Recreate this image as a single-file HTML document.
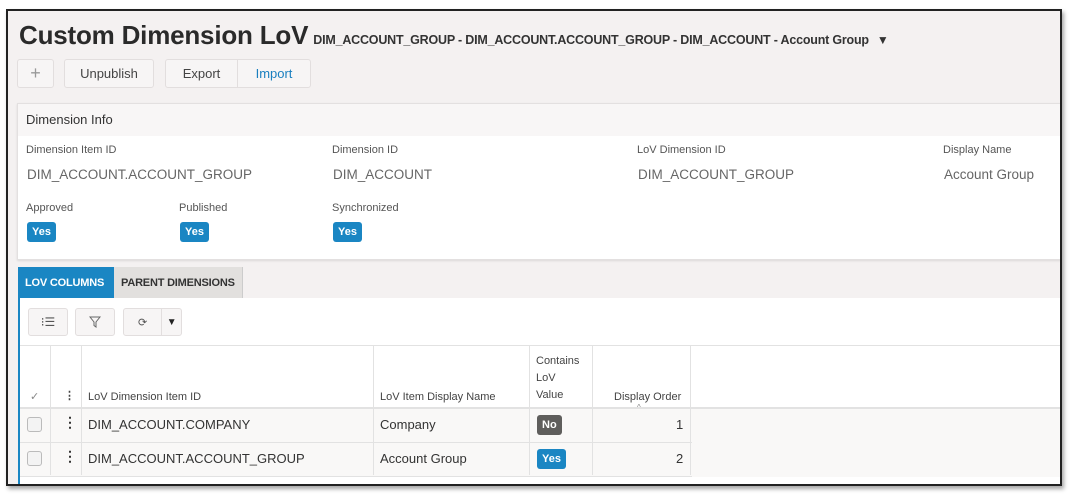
<!DOCTYPE html>
<html><head><meta charset="utf-8"><style>
*{box-sizing:border-box;margin:0;padding:0}
body{width:1072px;height:495px;background:#fff;font-family:"Liberation Sans",sans-serif;position:relative;overflow:hidden;color:#333}
.frame{position:absolute;left:6px;top:9px;width:1056px;height:477px;border:2px solid #222;background:#f4f1f1;box-shadow:2px 3px 4px rgba(0,0,0,.35);overflow:hidden}
h1{position:absolute;left:11px;top:9px;font-size:26px;font-weight:bold;color:#2a2a2a;white-space:nowrap;letter-spacing:-.2px}
h1 span{font-size:12.5px;font-weight:bold;color:#333;margin-left:5px;letter-spacing:-.2px}
.btn{position:absolute;top:48px;height:29px;border:1px solid #e2dede;border-radius:3px;background:#f7f5f5;font-size:13px;color:#444;display:flex;align-items:center;justify-content:center}
.panel{position:absolute;left:9px;top:92px;width:1045px;height:157px;background:#fff;border:1px solid #e3e0e0;box-shadow:0 1px 2px rgba(0,0,0,.1)}
.ph{height:32px;background:#f8f6f6;font-size:13px;padding:8px 8px;color:#333}
.lbl{position:absolute;font-size:11px;color:#555}
.val{position:absolute;font-size:13.5px;color:#666}
.yes{position:absolute;background:#1a86c3;color:#fff;font-size:11px;font-weight:bold;border-radius:3px;padding:4px 5px;line-height:12px}
.tab{position:absolute;top:256px;height:32px;font-size:11px;font-weight:bold;display:flex;align-items:center;padding:0 7px;white-space:nowrap;letter-spacing:-.2px}
.grid{position:absolute;left:10px;top:287px;width:1045px;height:190px;background:#fff;border-left:2px solid #1a86c3}
.tb{position:absolute;top:10px;height:28px;border:1px solid #e2dede;border-radius:3px;background:#f7f5f5;font-size:12px;color:#555;display:flex;align-items:center;justify-content:center}
.row{position:absolute;left:0;width:1043px;background:#f9f8f7}
.rl{position:absolute;left:0;width:672px;border-top:1px solid #e2e2e2}
.vl{position:absolute;top:47px;height:130px;border-left:1px solid #e2e2e2}
.cell{position:absolute;font-size:13px;color:#333}
.hd{position:absolute;font-size:11px;color:#444;line-height:17px}
.cb{position:absolute;width:15px;height:15px;border:1px solid #bbb;border-radius:3px;background:#f3f3f3}
.dots{position:absolute;font-size:14px;font-weight:bold;color:#333}
</style></head><body>
<div class="frame">
<h1>Custom Dimension LoV<span>DIM_ACCOUNT_GROUP - DIM_ACCOUNT.ACCOUNT_GROUP - DIM_ACCOUNT - Account Group</span><span style="font-size:12px;margin-left:8px">▼</span></h1>
<div class="btn" style="left:9px;width:37px;color:#999;font-size:18px">+</div>
<div class="btn" style="left:56px;width:90px">Unpublish</div>
<div class="btn" style="left:157px;width:73px;border-radius:3px 0 0 3px">Export</div>
<div class="btn" style="left:229px;width:74px;color:#1a7fbf;border-radius:0 3px 3px 0">Import</div>
<div class="panel">
<div class="ph">Dimension Info</div>
<div class="lbl" style="left:8px;top:40px">Dimension Item ID</div>
<div class="lbl" style="left:314px;top:40px">Dimension ID</div>
<div class="lbl" style="left:619px;top:40px">LoV Dimension ID</div>
<div class="lbl" style="left:925px;top:40px">Display Name</div>
<div class="val" style="left:9px;top:63px">DIM_ACCOUNT.ACCOUNT_GROUP</div>
<div class="val" style="left:315px;top:63px">DIM_ACCOUNT</div>
<div class="val" style="left:620px;top:63px">DIM_ACCOUNT_GROUP</div>
<div class="val" style="left:926px;top:63px">Account Group</div>
<div class="lbl" style="left:8px;top:98px">Approved</div>
<div class="lbl" style="left:161px;top:98px">Published</div>
<div class="lbl" style="left:314px;top:98px">Synchronized</div>
<div class="yes" style="left:9px;top:118px">Yes</div>
<div class="yes" style="left:162px;top:118px">Yes</div>
<div class="yes" style="left:315px;top:118px">Yes</div>
</div>
<div class="tab" style="left:10px;width:96px;background:#1a86c3;color:#fff">LOV COLUMNS</div>
<div class="tab" style="left:106px;width:129px;background:#e2e0de;color:#333;border-right:1px solid #ccc">PARENT DIMENSIONS</div>
<div class="grid">
<div class="tb" style="left:8px;width:40px">⁝☰</div>
<div class="tb" style="left:55px;width:40px"><svg width="12" height="12" viewBox="0 0 12 12"><path d="M1 1h10L7 6v5L5 9.5V6z" fill="none" stroke="#666"/></svg></div>
<div class="tb" style="left:103px;width:59px;justify-content:flex-start"><span style="width:38px;text-align:center;font-size:11px">⟳</span><span style="border-left:1px solid #e2dede;height:26px;width:20px;display:flex;align-items:center;justify-content:center;font-size:10px;color:#222">▼</span></div>
<div style="position:absolute;left:0;top:47px;width:1043px;border-top:1px solid #e2e2e2"></div>
<div class="row" style="top:109px;height:70px"></div>
<div style="position:absolute;left:0;top:109px;width:1043px;border-top:2px solid #e2e2e2"></div>
<div class="rl" style="top:144px"></div>
<div class="rl" style="top:178px"></div>
<div class="hd" style="left:10px;top:91px;color:#888">✓</div>
<div class="hd" style="left:44px;top:90px;font-weight:bold">⋮</div>
<div class="hd" style="left:68px;top:91px">LoV Dimension Item ID</div>
<div class="hd" style="left:360px;top:91px">LoV Item Display Name</div>
<div class="hd" style="left:516px;top:55px">Contains<br>LoV<br>Value</div>
<div class="hd" style="left:594px;top:91px">Display Order</div>
<div class="hd" style="left:617px;top:101px;font-size:8px;color:#888">^</div>
<div class="vl" style="left:30px"></div><div class="vl" style="left:61px"></div><div class="vl" style="left:353px"></div><div class="vl" style="left:509px"></div><div class="vl" style="left:572px"></div><div class="vl" style="left:670px"></div>
<div class="cb" style="left:7px;top:119px"></div><div class="cb" style="left:7px;top:153px"></div>
<div class="dots" style="left:43px;top:116px">⋮</div><div class="dots" style="left:43px;top:150px">⋮</div>
<div class="cell" style="left:68px;top:119px">DIM_ACCOUNT.COMPANY</div>
<div class="cell" style="left:68px;top:153px">DIM_ACCOUNT.ACCOUNT_GROUP</div>
<div class="cell" style="left:360px;top:119px">Company</div>
<div class="cell" style="left:360px;top:153px">Account Group</div>
<div class="yes" style="left:517px;top:117px;background:#5f5e5c">No</div>
<div class="yes" style="left:517px;top:151px">Yes</div>
<div class="cell" style="left:656px;top:119px">1</div>
<div class="cell" style="left:656px;top:153px">2</div>
</div>
</div>
</body></html>
